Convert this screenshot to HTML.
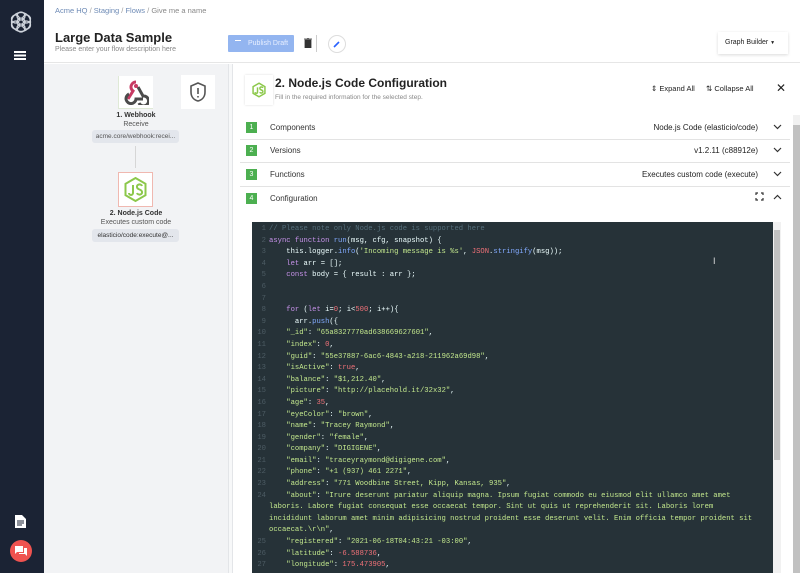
<!DOCTYPE html>
<html><head><meta charset="utf-8"><style>
*{margin:0;padding:0;box-sizing:border-box}
body{width:800px;height:573px;overflow:hidden;font-family:"Liberation Sans",sans-serif;background:#fff;position:relative;color:#222}
.abs{position:absolute}
#side{left:0;top:0;width:44px;height:573px;background:#1b2334}
#hdr{left:44px;top:0;width:756px;height:63px;background:#fff;border-bottom:1px solid #e6e6e6}
#left{left:44px;top:64px;width:184px;height:509px;background:#f2f3f5}
#split{left:228px;top:64px;width:5px;height:509px;background:#f7f8f9;border-left:1px solid #e3e5e8;border-right:1px solid #e3e5e8}
.row{position:absolute;left:240px;width:550px;height:24px;border-bottom:1px solid #e3e3e3;font-size:8px}
.num{position:absolute;left:6px;top:6px;width:11px;height:11px;background:#4caf50;color:#fff;font-size:7px;text-align:center;line-height:11px}
.lab{position:absolute;left:30px;top:7px;color:#333}
.val{position:absolute;right:32px;top:7px;color:#222}
.chev{position:absolute;right:8px;top:6px}
#code{left:252px;top:222px;width:521px;height:351px;background:#263238;font-family:"Liberation Mono",monospace;font-size:7.2px;line-height:11.6px;color:#eeffff;white-space:pre;padding-top:2px}
.l{display:block;height:11.6px}
.n{display:inline-block;width:14px;text-align:right;color:#4d5c64;margin-right:3px}
.c{color:#546e7a}.k{color:#c792ea}.s{color:#c3e88d}.r{color:#f07178}.f{color:#82aaff}
</style></head><body>
<div id="side" class="abs">
<svg class="abs" style="left:10px;top:11px" width="22" height="22" viewBox="0 0 22 22" fill="none" stroke="#cfd4dc" stroke-width="1.3"><circle cx="11" cy="11" r="9.5"/><circle cx="11" cy="11" r="4"/><circle cx="11" cy="5" r="4"/><circle cx="11" cy="17" r="4"/><circle cx="5.5" cy="8" r="4"/><circle cx="16.5" cy="8" r="4"/><circle cx="5.5" cy="14" r="4"/><circle cx="16.5" cy="14" r="4"/></svg>
<div class="abs" style="left:14px;top:51px;width:12px;height:1.5px;background:#fff;box-shadow:0 3.5px 0 #fff,0 7px 0 #fff"></div>
<svg class="abs" style="left:15px;top:515px" width="11" height="13" viewBox="0 0 11 13"><path d="M0 0h7l4 4v9H0z" fill="#fff"/><path d="M2 6h7M2 8h7M2 10h5" stroke="#1b2334" stroke-width="1"/></svg>
<div class="abs" style="left:10px;top:540px;width:22px;height:22px;border-radius:50%;background:#ef5350"></div>
<svg class="abs" style="left:15px;top:546px" width="12" height="10" viewBox="0 0 12 10"><path d="M0 0h8v6H2L0 8z" fill="#fff"/><path d="M9 2h3v8l-2-2H4V7h5z" fill="#fff"/></svg>
</div>
<div id="hdr" class="abs">
<div class="abs" style="left:11px;top:6px;font-size:7.5px;color:#6d8ab5">Acme HQ <span style="color:#999">/</span> Staging <span style="color:#999">/</span> Flows <span style="color:#999">/</span> <span style="color:#888">Give me a name</span></div>
<div class="abs" style="left:11px;top:30px;font-size:13px;font-weight:bold;color:#222">Large Data Sample</div>
<div class="abs" style="left:11px;top:46px;font-size:7px;color:#888">Please enter your flow description here</div>
<div class="abs" style="left:184px;top:35px;width:66px;height:17px;background:#93b5f0;border-radius:1px;color:#e8efff;font-size:7px;line-height:17px;padding-left:20px">Publish Draft</div>
<div class="abs" style="left:191px;top:40px;width:6px;height:7px;border-top:1.5px solid #fff"></div>
<svg class="abs" style="left:260px;top:38px" width="8" height="10" viewBox="0 0 8 10"><path d="M0 1h8M3 0h2M1 2h6v8H1z" fill="#333" stroke="#333" stroke-width=".8"/></svg>
<div class="abs" style="left:272px;top:35px;width:1px;height:17px;background:#ccc"></div>
<div class="abs" style="left:284px;top:35px;width:18px;height:18px;border-radius:50%;border:1px solid #ddd"></div>
<svg class="abs" style="left:289px;top:40px" width="8" height="8" viewBox="0 0 8 8"><path d="M1 7l5-5" stroke="#2962ff" stroke-width="1.6"/></svg>
<div class="abs" style="left:674px;top:32px;width:70px;height:22px;background:#fff;box-shadow:0 1px 3px rgba(0,0,0,.15);font-size:7px;line-height:22px;padding-left:7px;color:#222">Graph Builder <span style="font-size:5px">&#9660;</span></div>
</div>
<div id="left" class="abs">
<div class="abs" style="left:74px;top:12px;width:35px;height:33px;background:#fff;border-left:1px solid #dfe9d6;border-bottom:1px solid #dfe9d6"></div>
<svg class="abs" style="left:79px;top:15px" width="26" height="26" viewBox="0 0 26 26" fill="none" stroke-width="3"><path d="M13 3a5 5 0 0 0-3 9l-5 8" stroke="#c73a63"/><path d="M6 15a5 5 0 1 0 7 5h7" stroke="#4b4b4b"/><path d="M15 8l5 9a5 5 0 1 1-4 7" stroke="#4b4b4b"/><circle cx="13" cy="7" r="2" fill="#c73a63" stroke="none"/></svg>
<div class="abs" style="left:137px;top:11px;width:34px;height:34px;background:#fff"></div>
<svg class="abs" style="left:146px;top:18px" width="16" height="20" viewBox="0 0 16 20" fill="none" stroke="#555" stroke-width="1.6"><path d="M8 1L1 4v6c0 5 3 8 7 9 4-1 7-4 7-9V4z"/><path d="M8 6v6M8 14v1.5"/></svg>
<div class="abs" style="left:60px;top:48px;width:64px;text-align:center;font-size:7px;color:#333;font-weight:bold">1. Webhook</div>
<div class="abs" style="left:60px;top:57px;width:64px;text-align:center;font-size:7px;color:#555">Receive</div>
<div class="abs" style="left:48px;top:66px;width:87px;height:13px;background:#e3e6ec;border-radius:3px;font-size:6.5px;line-height:13px;text-align:center;color:#555">acme.core/webhook:recei...</div>
<div class="abs" style="left:91px;top:82px;width:1px;height:22px;background:#d6d6d6"></div>
<div class="abs" style="left:74px;top:108px;width:35px;height:35px;background:#fff;border:1px solid #f0b8b0"></div>
<svg class="abs" style="left:78px;top:112px" width="27" height="27" viewBox="0 0 27 27" fill="none" stroke="#8cc84b" stroke-width="2"><path d="M13.5 2l10 5.8v11.4l-10 5.8-10-5.8V7.8z"/><path d="M11 9v8a2 2 0 0 1-4 0M20 10a2.5 2 0 0 0-5 1c0 3 5 2 5 5a2.5 2 0 0 1-5 1"/></svg>
<div class="abs" style="left:56px;top:146px;width:72px;text-align:center;font-size:7px;color:#333;font-weight:bold">2. Node.js Code</div>
<div class="abs" style="left:56px;top:155px;width:72px;text-align:center;font-size:7px;color:#555">Executes custom code</div>
<div class="abs" style="left:48px;top:165px;width:87px;height:13px;background:#e3e6ec;border-radius:3px;font-size:6.5px;line-height:13px;text-align:center;color:#333">elasticio/code:execute@...</div>
</div>
<div id="split" class="abs"></div>
<div class="abs" style="left:245px;top:75px;width:28px;height:30px;background:#fff;box-shadow:0 0 2px rgba(0,0,0,.15)"></div>
<svg class="abs" style="left:251px;top:82px" width="16" height="16" viewBox="0 0 27 27" fill="none" stroke="#8cc84b" stroke-width="2.5"><path d="M13.5 2l10 5.8v11.4l-10 5.8-10-5.8V7.8z"/><path d="M11 9v8a2 2 0 0 1-4 0M20 10a2.5 2 0 0 0-5 1c0 3 5 2 5 5a2.5 2 0 0 1-5 1"/></svg>
<div class="abs" style="left:275px;top:76px;font-size:12px;font-weight:bold;color:#222">2. Node.js Code Configuration</div>
<div class="abs" style="left:275px;top:94px;font-size:6.5px;color:#888">Fill in the required information for the selected step.</div>
<div class="abs" style="left:651px;top:84px;font-size:7.5px;color:#222">&#8661; Expand All</div>
<div class="abs" style="left:706px;top:84px;font-size:7.5px;color:#222">&#8645; Collapse All</div>
<div class="abs" style="left:776px;top:81px;font-size:12px;color:#222">&#10005;</div>
<div class="row" style="top:116px"><div class="num">1</div><div class="lab">Components</div><div class="val">Node.js Code (elasticio/code)</div><div class="chev"><svg width="9" height="9"><path d="M1 3l3.5 3.5L8 3" stroke="#333" fill="none" stroke-width="1.2"/></svg></div></div>
<div class="row" style="top:139px"><div class="num">2</div><div class="lab">Versions</div><div class="val">v1.2.11 (c88912e)</div><div class="chev"><svg width="9" height="9"><path d="M1 3l3.5 3.5L8 3" stroke="#333" fill="none" stroke-width="1.2"/></svg></div></div>
<div class="row" style="top:163px"><div class="num">3</div><div class="lab">Functions</div><div class="val">Executes custom code (execute)</div><div class="chev"><svg width="9" height="9"><path d="M1 3l3.5 3.5L8 3" stroke="#333" fill="none" stroke-width="1.2"/></svg></div></div>
<div class="row" style="top:187px;border:none"><div class="num">4</div><div class="lab">Configuration</div><div class="val" style="right:26px;top:5px"><svg width="9" height="9" fill="none" stroke="#333" stroke-width="1.2"><path d="M1 3V1h2M6 1h2v2M8 6v2H6M3 8H1V6"/></svg></div><div class="chev"><svg width="9" height="9"><path d="M1 6l3.5-3.5L8 6" stroke="#333" fill="none" stroke-width="1.2"/></svg></div></div>
<div class="abs" style="left:793px;top:115px;width:7px;height:458px;background:#f1f1f1"></div>
<div class="abs" style="left:793px;top:125px;width:7px;height:448px;background:#c1c1c1"></div>
<div id="code" class="abs"><span class="l"><span class="n">1</span><span class="c">// Please note only Node.js code is supported here</span></span><span class="l"><span class="n">2</span><span class="k">async function</span> <span class="f">run</span>(msg, cfg, snapshot) {</span><span class="l"><span class="n">3</span>    this.logger.<span class="f">info</span>(<span class="s">'Incoming message is %s'</span>, <span class="r">JSON</span>.<span class="f">stringify</span>(msg));</span><span class="l"><span class="n">4</span>    <span class="k">let</span> arr = [];</span><span class="l"><span class="n">5</span>    <span class="k">const</span> body = { result : arr };</span><span class="l"><span class="n">6</span></span><span class="l"><span class="n">7</span></span><span class="l"><span class="n">8</span>    <span class="k">for</span> (<span class="k">let</span> i=<span class="r">0</span>; i&lt;<span class="r">500</span>; i++){</span><span class="l"><span class="n">9</span>      arr.<span class="f">push</span>({</span><span class="l"><span class="n">10</span>    <span class="s">"_id"</span>: <span class="s">"65a8327770ad638669627601"</span>,</span><span class="l"><span class="n">11</span>    <span class="s">"index"</span>: <span class="r">0</span>,</span><span class="l"><span class="n">12</span>    <span class="s">"guid"</span>: <span class="s">"55e37887-6ac6-4843-a218-211962a69d98"</span>,</span><span class="l"><span class="n">13</span>    <span class="s">"isActive"</span>: <span class="r">true</span>,</span><span class="l"><span class="n">14</span>    <span class="s">"balance"</span>: <span class="s">"$1,212.40"</span>,</span><span class="l"><span class="n">15</span>    <span class="s">"picture"</span>: <span class="s">"http://placehold.it/32x32"</span>,</span><span class="l"><span class="n">16</span>    <span class="s">"age"</span>: <span class="r">35</span>,</span><span class="l"><span class="n">17</span>    <span class="s">"eyeColor"</span>: <span class="s">"brown"</span>,</span><span class="l"><span class="n">18</span>    <span class="s">"name"</span>: <span class="s">"Tracey Raymond"</span>,</span><span class="l"><span class="n">19</span>    <span class="s">"gender"</span>: <span class="s">"female"</span>,</span><span class="l"><span class="n">20</span>    <span class="s">"company"</span>: <span class="s">"DIGIGENE"</span>,</span><span class="l"><span class="n">21</span>    <span class="s">"email"</span>: <span class="s">"traceyraymond@digigene.com"</span>,</span><span class="l"><span class="n">22</span>    <span class="s">"phone"</span>: <span class="s">"+1 (937) 461 2271"</span>,</span><span class="l"><span class="n">23</span>    <span class="s">"address"</span>: <span class="s">"771 Woodbine Street, Kipp, Kansas, 935"</span>,</span><span class="l"><span class="n">24</span>    <span class="s">"about"</span>: <span class="s">"Irure deserunt pariatur aliquip magna. Ipsum fugiat commodo eu eiusmod elit ullamco amet amet</span></span><span class="l"><span class="n"></span><span class="s">laboris. Labore fugiat consequat esse occaecat tempor. Sint ut quis ut reprehenderit sit. Laboris lorem</span></span><span class="l"><span class="n"></span><span class="s">incididunt laborum amet minim adipisicing nostrud proident esse deserunt velit. Enim officia tempor proident sit</span></span><span class="l"><span class="n"></span><span class="s">occaecat.\r\n"</span>,</span><span class="l"><span class="n">25</span>    <span class="s">"registered"</span>: <span class="s">"2021-06-18T04:43:21 -03:00"</span>,</span><span class="l"><span class="n">26</span>    <span class="s">"latitude"</span>: <span class="r">-6.588736</span>,</span><span class="l"><span class="n">27</span>    <span class="s">"longitude"</span>: <span class="r">175.473905</span>,</span></div>
<div class="abs" style="left:773px;top:222px;width:8px;height:351px;background:#f1f1f1"></div>
<div class="abs" style="left:774px;top:230px;width:6px;height:230px;background:#c1c1c1"></div>
<div class="abs" style="left:713px;top:256px;font-size:9px;color:#ddd">I</div>
</body></html>
